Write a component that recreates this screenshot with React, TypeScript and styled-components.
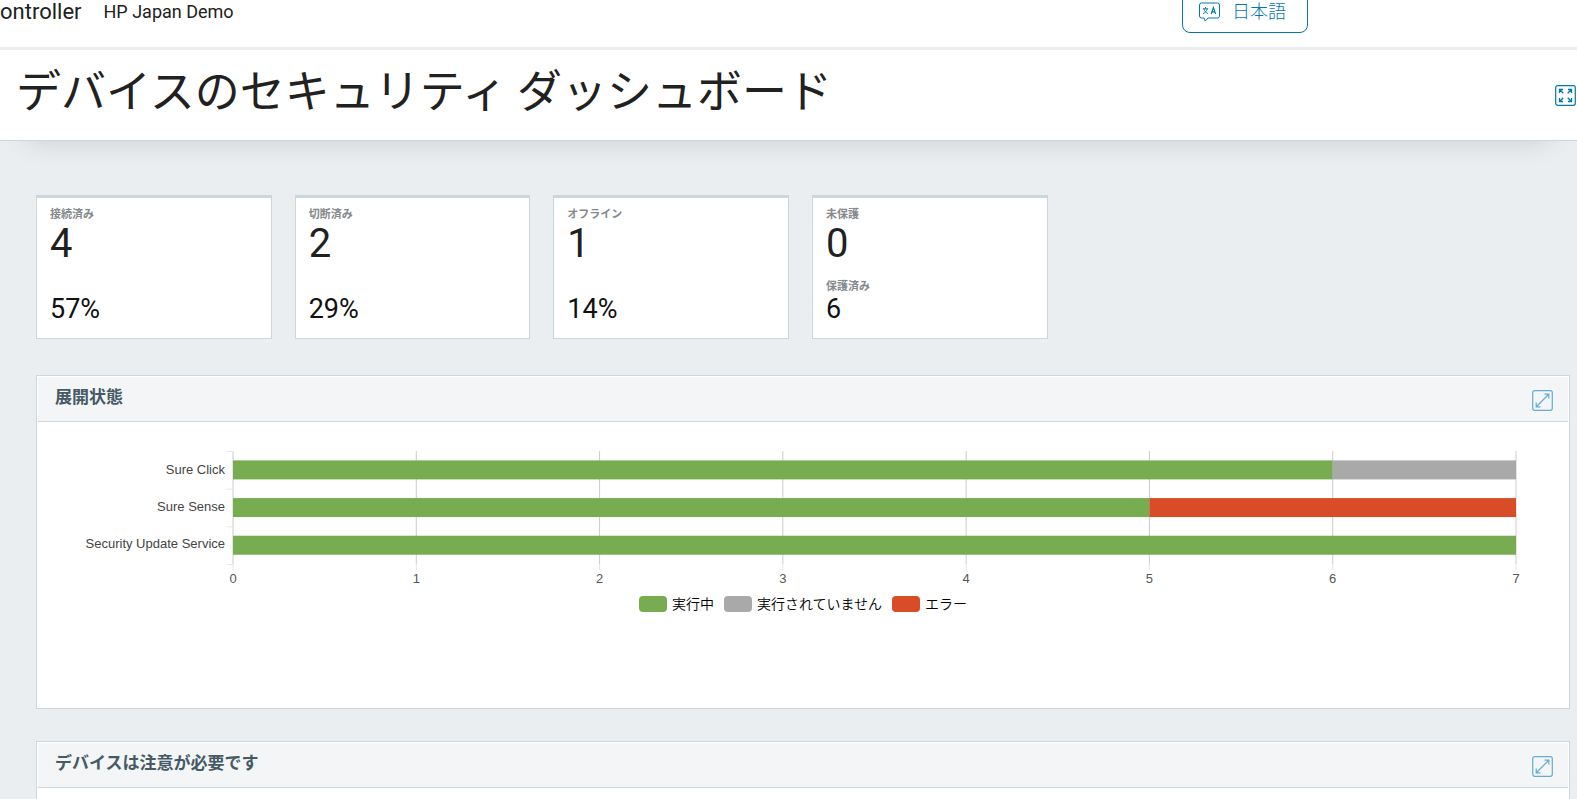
import React from "react";
import styled, { createGlobalStyle } from "styled-components";

const chartFont = `"Liberation Sans", "Noto Sans CJK JP", sans-serif`;
const baseFont = `Roboto, "Noto Sans CJK JP", sans-serif`;

const GlobalStyle = createGlobalStyle`
  * { box-sizing: border-box; }
  body {
    margin: 0;
    background: #eaeef1;
    color: #212121;
    font-family: ${baseFont};
    overflow: hidden;
  }
`;

const TopBar = styled.header`
  display: flex;
  align-items: flex-end;
  height: 50px;
  padding-right: 269px;
  border-bottom: 3px solid #eaeef1;
  background: #fff;
`;

const Brand = styled.div`
  margin-bottom: 23px;
  font-size: 22px;
  line-height: 24px;
`;

const Tenant = styled.div`
  margin: 0 auto 23px 22px;
  font-size: 18px;
  line-height: 24px;
`;

const LanguageButton = styled.button`
  display: flex;
  align-items: center;
  gap: 12px;
  height: 42px;
  margin-bottom: 14px;
  padding: 0 21px 0 16px;
  border: 1px solid #0278ab;
  border-radius: 8px;
  background: #fff;
  color: #0278ab;
  font-family: ${baseFont};
  font-weight: 300;
  font-size: 18px;
  line-height: 24px;
  white-space: nowrap;
`;

const TitleBar = styled.div`
  display: flex;
  align-items: center;
  justify-content: space-between;
  height: 91px;
  padding: 0 1px 0 16px;
  border-bottom: 1px solid #cdd7db;
  background: #fff;
  box-shadow: 0 28px 28px -28px rgba(0, 0, 0, 0.14);
`;

const Title = styled.h1`
  margin: 0;
  padding-bottom: 12px;
  font-family: "Noto Sans CJK JP", sans-serif;
  font-weight: 400;
  font-size: 45px;
  line-height: 68px;
`;

const IconButton = styled.button`
  display: flex;
  padding: 0;
  border: 0;
  background: none;
  color: #0278ab;
`;

const Content = styled.main`
  display: flex;
  flex-direction: column;
  padding: 54px 7px 0 36px;
`;

const Stats = styled.section`
  display: grid;
  grid-template-columns: repeat(6, 1fr);
  gap: 23px;
  margin: 0 5px 36px 0;
`;

const StatCard = styled.article`
  display: flex;
  flex-direction: column;
  height: 144px;
  padding: 10px 13px 14px;
  border: 1px solid #cdd7db;
  border-top-width: 3px;
  background: #fff;
`;

const StatLabel = styled.div`
  color: #84898c;
  font-weight: 700;
  font-size: 11px;
  line-height: 14px;
`;

const StatValue = styled.div`
  font-size: 40px;
  line-height: 44px;
`;

const StatFoot = styled.div`
  margin-top: auto;
`;

const StatShare = styled.div`
  font-size: 27px;
  line-height: 30px;
  color: #111;
`;

const Panel = styled.section`
  min-height: 334px;
  margin-bottom: 32px;
  padding: 1px;
  border: 1px solid #cdd7db;
  background: #fff;
`;

const PanelHead = styled.div`
  display: flex;
  align-items: center;
  justify-content: space-between;
  height: 45px;
  padding: 2px 15px 0 17px;
  border-bottom: 1px solid #cdd7db;
  background: #f3f5f7;

  button {
    color: #65add0;
  }
`;

const PanelTitle = styled.h2`
  margin: 0 0 6px;
  color: #455a64;
  font-weight: 700;
  font-size: 17px;
  line-height: 24px;
`;

const Chart = styled.div`
  display: grid;
  grid-template-columns: 187px 1fr;
  column-gap: 8px;
  padding: 29px 52px 0 0;
`;

const Categories = styled.div`
  display: grid;
  grid-template-rows: repeat(3, 1fr);
  align-items: center;
  height: 113px;
  padding-bottom: 2px;
  text-align: right;
  font-family: ${chartFont};
  font-size: 13px;
  line-height: 16px;
  color: #444;
`;

const Plot = styled.svg`
  display: block;
  width: 100%;
  height: 136px;
  overflow: visible;
  font-family: ${chartFont};
  font-size: 13px;
`;

const Legend = styled.ul`
  display: flex;
  justify-content: center;
  gap: 10px;
  margin: 7px 0 0;
  padding: 0;
  list-style: none;
`;

const LegendItem = styled.li`
  display: flex;
  align-items: center;
  gap: 5px;
  color: #000;
  font-weight: 350;
  font-size: 14px;
  line-height: 20px;
`;

const Swatch = styled.span<{ $color: string }>`
  width: 28px;
  height: 16px;
  border-radius: 4px;
  background: ${(p) => p.$color};
`;

const green = "#77ad50";
const gray = "#a9a9a9";
const red = "#d84d27";

const rows = [
  { name: "Sure Click", parts: [[6, green], [1, gray]] },
  { name: "Sure Sense", parts: [[5, green], [2, red]] },
  { name: "Security Update Service", parts: [[7, green]] },
] as { name: string; parts: [number, string][] }[];

const legend = [
  ["実行中", green],
  ["実行されていません", gray],
  ["エラー", red],
];

const stats = [
  { label: "接続済み", value: "4", share: "57%" },
  { label: "切断済み", value: "2", share: "29%" },
  { label: "オフライン", value: "1", share: "14%" },
  { label: "未保護", value: "0", shareLabel: "保護済み", share: "6" },
];

const MAX = 7;
const ROW = 113 / 3;
const pct = (n: number) => `${(n / MAX) * 100}%`;

const LanguageIcon = () => (
  <svg width="21" height="20" viewBox="0 0 21 20" fill="none" stroke="currentColor" aria-hidden="true">
    <path d="M2.500 1h16a2 2 0 0 1 2 2v11a2 2 0 0 1-2 2H9l-2.800 3L5 16H2.500a2 2 0 0 1-2-2V3a2 2 0 0 1 2-2z" />
    <path d="M6.500 5v1.500M3.800 6.800h5.400M8.200 7c-.5 2-2 3.800-4.200 4.600M4.900 7c.5 2 2 3.800 4.200 4.600" />
    <path d="M12.200 12l2.200-6.500L16.600 12M12.900 9.900h3" strokeWidth="1.200" />
  </svg>
);

const FullscreenIcon = () => (
  <svg width="21" height="21" viewBox="0 0 21 21" fill="none" stroke="currentColor" aria-hidden="true">
    <rect x="0.700" y="0.700" width="19.600" height="19.600" rx="2" strokeWidth="1.200" />
    <path
      d="M8.300 8.300L4.800 4.800M4.500 8V4.500H8M12.700 8.300l3.500-3.500M13 4.500h3.500V8M8.300 12.700l-3.500 3.500M4.500 13v3.500H8M12.700 12.700l3.500 3.500M13 16.500h3.500V13"
      strokeWidth="1.300"
    />
  </svg>
);

const ExpandIcon = () => (
  <svg width="21" height="21" viewBox="0 0 21 21" fill="none" stroke="currentColor" aria-hidden="true">
    <rect x="0.700" y="0.700" width="19.600" height="19.600" rx="2" strokeWidth="1.200" />
    <path d="M4.500 16.500l12-12M12.500 4.200h4.300v4.300M4.200 12.500v4.300h4.300" strokeWidth="1.200" />
  </svg>
);

const BarPlot = () => (
  <Plot role="img" aria-label="展開状態">
    {Array.from({ length: MAX + 1 }, (_, n) => (
      <g key={n}>
        <line x1={pct(n)} x2={pct(n)} y1="0" y2="113" stroke="#cccccc" />
        <line x1={pct(n)} x2={pct(n)} y1="113" y2="119" stroke="#e6e6e6" />
        <text x={pct(n)} y="132" textAnchor="middle" fill="#555">
          {n}
        </text>
      </g>
    ))}
    {[0, 1, 2, 3].map((n) => (
      <line key={n} x1="-6" x2="0" y1={n * ROW + 0.5} y2={n * ROW + 0.5} stroke="#e6e6e6" />
    ))}
    {rows.map((row, i) => {
      let start = 0;
      return row.parts.map(([size, color]) => {
        const x = start;
        start += size;
        return <rect key={color} x={pct(x)} y={i * ROW + 9.4} width={pct(size)} height="19" fill={color} />;
      });
    })}
  </Plot>
);

const PanelHeader = ({ title }: { title: string }) => (
  <PanelHead>
    <PanelTitle>{title}</PanelTitle>
    <IconButton type="button" aria-label={`${title} 拡大`}>
      <ExpandIcon />
    </IconButton>
  </PanelHead>
);

export default function App() {
  return (
    <>
      <GlobalStyle />
      <TopBar>
        <Brand>ontroller</Brand>
        <Tenant>HP Japan Demo</Tenant>
        <LanguageButton type="button">
          <LanguageIcon />
          日本語
        </LanguageButton>
      </TopBar>
      <TitleBar>
        <Title>デバイスのセキュリティ ダッシュボード</Title>
        <IconButton type="button" aria-label="全画面表示">
          <FullscreenIcon />
        </IconButton>
      </TitleBar>
      <Content>
        <Stats>
          {stats.map((s) => (
            <StatCard key={s.label}>
              <StatLabel>{s.label}</StatLabel>
              <StatValue>{s.value}</StatValue>
              <StatFoot>
                {s.shareLabel && <StatLabel>{s.shareLabel}</StatLabel>}
                <StatShare>{s.share}</StatShare>
              </StatFoot>
            </StatCard>
          ))}
        </Stats>
        <Panel>
          <PanelHeader title="展開状態" />
          <Chart>
            <Categories>
              {rows.map((r) => (
                <div key={r.name}>{r.name}</div>
              ))}
            </Categories>
            <BarPlot />
          </Chart>
          <Legend>
            {legend.map(([name, color]) => (
              <LegendItem key={name}>
                <Swatch $color={color} />
                {name}
              </LegendItem>
            ))}
          </Legend>
        </Panel>
        <Panel>
          <PanelHeader title="デバイスは注意が必要です" />
        </Panel>
      </Content>
    </>
  );
}
